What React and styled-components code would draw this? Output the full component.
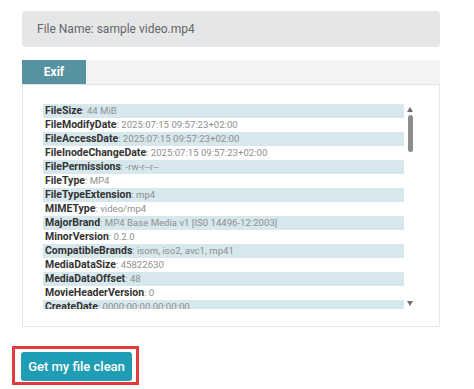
import React from "react";
import styled, { createGlobalStyle } from "styled-components";

const GlobalStyle = createGlobalStyle`
  html, body {
    margin: 0;
    padding: 0;
    background: #ffffff;
    font-family: Roboto, "Liberation Sans", Arial, sans-serif;
  }
`;

const Page = styled.div`
  padding: 11px 34px 0 22px;
  width: 418px;
`;

const FileNameBar = styled.div`
  height: 36px;
  border-radius: 4px;
  background: #e5e6e8;
  display: flex;
  align-items: center;
  padding-left: 15px;
  font-size: 12px;
  color: #666;
`;

const Panel = styled.div`
  margin-top: 13px;
  border: 1px solid #e6e6e6;
  height: 267px;
  display: flex;
  flex-direction: column;
  box-sizing: border-box;
`;

const TabBar = styled.div`
  height: 24px;
  background: #f3f3f3;
  border-bottom: 1px solid #e2e2e2;
  display: flex;
  margin: -1px -1px 0 -1px;
`;

const Tab = styled.div`
  width: 64px;
  background: ${(p) => (p.$active ? "#5692a2" : "transparent")};
  color: #fff;
  font-weight: 700;
  font-size: 12px;
  display: flex;
  align-items: center;
  justify-content: center;
`;

const Body = styled.div`
  padding: 19px 23px 0 20px;
`;

const ScrollArea = styled.div`
  height: 205px;
  display: flex;
`;

const List = styled.div`
  flex: 1;
  overflow: hidden;
`;

const Scrollbar = styled.div`
  width: 12px;
  display: flex;
  flex-direction: column;
  align-items: center;
  padding-top: 3px;
`;

const Arrow = styled.div`
  width: 0;
  height: 0;
  border-left: 3.5px solid transparent;
  border-right: 3.5px solid transparent;
  ${(p) =>
    p.$down
      ? "border-top: 5px solid #6f6f6f; margin-top: auto; margin-bottom: 3px;"
      : "border-bottom: 5px solid #6f6f6f;"}
`;

const Thumb = styled.div`
  width: 5px;
  height: 37px;
  margin-top: 3px;
  border-radius: 3px;
  background: #8c8c8c;
`;

const Row = styled.div`
  height: 14px;
  line-height: 14px;
  font-size: 10.5px;
  padding-left: 2px;
  white-space: nowrap;
  overflow: hidden;
  background: ${(p) => (p.$shaded ? "#d6e7ed" : "#fff")};
`;

const Key = styled.span`
  font-weight: 700;
  color: #333;
`;

const Value = styled.span`
  color: #8f8f8f;
  font-size: 9.6px;
`;

const Highlight = styled.div`
  margin: 19px 0 0 -10px;
  display: inline-block;
  border: 3px solid #e23b3d;
  padding: 3px 4px 1px 6px;
`;

const CleanButton = styled.button`
  height: 29px;
  width: 111px;
  border: none;
  border-radius: 3px;
  background: #1f9db4;
  color: #fff;
  font-family: Roboto, "Liberation Sans", Arial, sans-serif;
  font-size: 13px;
  font-weight: 500;
  cursor: pointer;
  display: block;
`;

const exif = [
  ["FileSize", "44 MiB"],
  ["FileModifyDate", "2025:07:15 09:57:23+02:00"],
  ["FileAccessDate", "2025:07:15 09:57:23+02:00"],
  ["FileInodeChangeDate", "2025:07:15 09:57:23+02:00"],
  ["FilePermissions", "-rw-r--r--"],
  ["FileType", "MP4"],
  ["FileTypeExtension", "mp4"],
  ["MIMEType", "video/mp4"],
  ["MajorBrand", "MP4 Base Media v1 [IS0 14496-12:2003]"],
  ["MinorVersion", "0.2.0"],
  ["CompatibleBrands", "isom, iso2, avc1, mp41"],
  ["MediaDataSize", "45822630"],
  ["MediaDataOffset", "48"],
  ["MovieHeaderVersion", "0"],
  ["CreateDate", "0000:00:00 00:00:00"],
  ["ModifyDate", "0000:00:00 00:00:00"],
  ["TimeScale", "1000"],
  ["Duration", "0:01:12"],
];

export default function App() {
  return (
    <Page>
      <GlobalStyle />
      <FileNameBar>File Name: sample video.mp4</FileNameBar>
      <Panel>
        <TabBar>
          <Tab $active>Exif</Tab>
        </TabBar>
        <Body>
          <ScrollArea>
            <List>
              {exif.map(([k, v], i) => (
                <Row key={k} $shaded={i % 2 === 0}>
                  <Key>{k}</Key>
                  <Value>: {v}</Value>
                </Row>
              ))}
            </List>
            <Scrollbar>
              <Arrow />
              <Thumb />
              <Arrow $down />
            </Scrollbar>
          </ScrollArea>
        </Body>
      </Panel>
      <Highlight>
        <CleanButton>Get my file clean</CleanButton>
      </Highlight>
    </Page>
  );
}
